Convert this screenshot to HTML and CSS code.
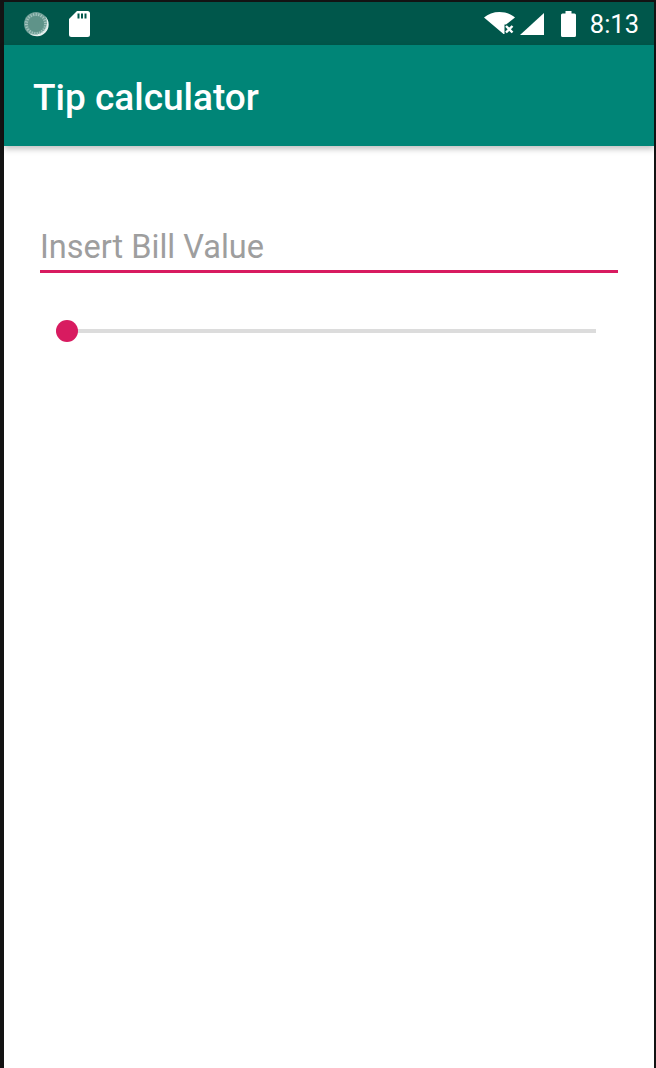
FILE: index.html
```html
<!DOCTYPE html>
<html lang="en">
<head>
    <meta charset="UTF-8">
    <meta name="viewport" content="width=device-width, initial-scale=1.0">
    <title>Tip calculator</title>
    <link rel="stylesheet" href="styles.css">
</head>
<body>
    <div class="phone">
        <div class="status-bar">
            <div class="status-left">
                <svg class="icon-spinner" width="26" height="26" viewBox="0 0 26 26">
                    <circle cx="13" cy="13" r="12" fill="#6f9f97"/>
                    <path d="M22 5a12 12 0 0 1-16 17a11 11 0 0 0 16-17z" fill="#e6f0ee"/>
                    <circle cx="13" cy="13" r="9.5" fill="none" stroke="#a9c8c2" stroke-width="3" stroke-dasharray="1 1.6"/>
                    <circle cx="13" cy="13" r="8" fill="#5f9389"/>
                </svg>
                <svg class="icon-sd" width="21" height="26" viewBox="0 0 21 26">
                    <path d="M8 0h10.5a2.5 2.5 0 0 1 2.5 2.500v21a2.500 2.500 0 0 1-2.500 2.500h-16a2.500 2.500 0 0 1-2.500-2.500v-15.500z" fill="#fff"/>
                    <path d="M8.500 2.500h2v5h-2zM12 2.500h2v5h-2zM15.500 2.500h2v5h-2z" fill="#00574b"/>
                </svg>
            </div>
            <div class="status-right">
                <svg class="icon-wifi" width="31" height="23" viewBox="0 0 31 23">
                    <path d="M0 5.500C4 2 9.500 0 15.500 0S27 2 31 5.500L22 12.500h-1.500v9.500h-1z" fill="#fff"/>
                    <path d="M22 14l6.500 6.500M28.500 14L22 20.500" stroke="#fff" stroke-width="2.400"/>
                </svg>
                <svg class="icon-signal" width="24" height="22" viewBox="0 0 24 22">
                    <path d="M24 0v22H0z" fill="#fff"/>
                </svg>
                <svg class="icon-battery" width="15" height="26" viewBox="0 0 15 26">
                    <path d="M4.500 0h6v2.500h3a1.500 1.500 0 0 1 1.500 1.500v20.500a1.500 1.500 0 0 1-1.500 1.500h-12a1.500 1.500 0 0 1-1.500-1.500v-20.500a1.500 1.500 0 0 1 1.500-1.500h3z" fill="#fff"/>
                </svg>
                <span class="clock">8:13</span>
            </div>
        </div>

        <div class="app-bar">
            <h1>Tip calculator</h1>
        </div>

        <div class="content">
            <div class="bill-input">Insert Bill Value</div>
            <div class="slider">
                <div class="slider-track"></div>
                <div class="slider-thumb"></div>
            </div>
        </div>
    </div>
</body>
</html>
```

FILE: styles.css
```css
:root {
    --primary-color: #008577;
    --primary-dark: #00574b;
    --accent-color: #d81b60;
    --frame-color: #131313;
}

* {
    margin: 0;
    padding: 0;
    box-sizing: border-box;
}

html,
body {
    height: 100%;
}

body {
    font-family: Roboto, 'Noto Sans', sans-serif;
    background-color: var(--frame-color);
    padding: 2px 2px 0 4px;
    overflow: hidden;
}

.phone {
    height: 100%;
    background-color: white;
    display: flex;
    flex-direction: column;
}

.status-bar {
    height: 43px;
    flex-shrink: 0;
    background-color: var(--primary-dark);
    display: flex;
    justify-content: space-between;
    align-items: center;
    padding: 0 15px 0 19px;
    color: white;
}

.status-left,
.status-right {
    display: flex;
    align-items: center;
}

.status-left {
    gap: 20px;
}

.icon-spinner,
.icon-sd,
.icon-wifi,
.icon-signal,
.icon-battery {
    display: block;
}

.icon-wifi {
    margin-right: 5px;
}

.icon-signal {
    margin-right: 17px;
}

.icon-battery {
    margin-right: 14px;
}

.clock {
    font-size: 25.5px;
    line-height: 30px;
}

.app-bar {
    height: 101px;
    flex-shrink: 0;
    background-color: var(--primary-color);
    display: flex;
    align-items: center;
    padding: 3px 0 0 29px;
    box-shadow: 0 3px 6px rgba(0, 0, 0, 0.25);
    position: relative;
}

.app-bar h1 {
    color: white;
    font-size: 37px;
    font-weight: 500;
}

.content {
    padding: 82px 36px 0;
}

.bill-input {
    height: 45px;
    border-bottom: 3px solid var(--accent-color);
    color: #9e9e9e;
    font-size: 32.5px;
    line-height: 38px;
}

.slider {
    position: relative;
    height: 22px;
    margin: 47px 22px 0 16px;
    display: flex;
    align-items: center;
}

.slider-track {
    width: 100%;
    height: 4px;
    background-color: #dcdcdc;
}

.slider-thumb {
    position: absolute;
    left: 0;
    top: 0;
    width: 22px;
    height: 22px;
    border-radius: 50%;
    background-color: var(--accent-color);
}
```
